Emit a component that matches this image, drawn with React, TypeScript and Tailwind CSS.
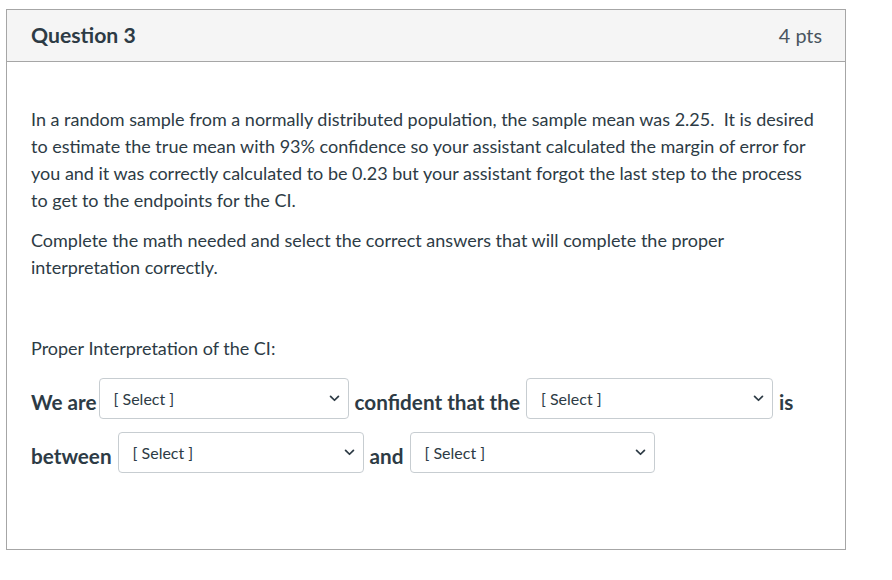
function Dropdown({ width, className = '' }: { width: string; className?: string }) {
  return (
    <div
      className={`${width} ${className} flex h-[41px] shrink-0 items-center justify-between rounded-[4px] border border-[#c7cdd1] bg-white pl-[14px] pr-[8px] font-normal`}
    >
      <span className="pb-[1px] text-[16px] text-[#2d3b45]">[ Select ]</span>
      <svg viewBox="0 0 12 8" className="h-[7px] w-[11px]" fill="none">
        <path d="M1.5 1.5 6 6l4.5-4.5" stroke="#2d3b45" strokeWidth="2" strokeLinecap="round" strokeLinejoin="round" />
      </svg>
    </div>
  );
}

export default function App() {
  return (
    <div className="min-h-[580px] bg-white pl-[6px] pt-[9px] font-['Lato',sans-serif] text-[#2d3b45]">
      <div className="flex h-[541px] w-[840px] flex-col border border-[#a6a6a6]">
        <div className="flex h-[52px] shrink-0 items-center justify-between border-b border-[#a6a6a6] bg-[#f5f5f5] pl-[24px] pr-[23px]">
          <h2 className="text-[21.2px] font-bold">Question 3</h2>
          <span className="text-[19.8px] text-[#4a5560]">4 pts</span>
        </div>

        <div className="px-[24px] pt-[44px] text-[18px] leading-[27px]">
          <p>
            In a random sample from a normally distributed population, the sample mean was 2.25.&nbsp; It is desired
            to estimate the true mean with 93% confidence so your assistant calculated the margin of error for
            you and it was correctly calculated to be 0.23 but your assistant forgot the last step to the process
            to get to the endpoints for the CI.
          </p>
          <p className="mt-[13px]">
            Complete the math needed and select the correct answers that will complete the proper interpretation
            correctly.
          </p>
          <p className="mt-[54px]">Proper Interpretation of the CI:</p>

          <div className="mt-[16px] flex items-center text-[20.7px] font-bold">
            <span className="pt-[7px]">We are</span>
            <Dropdown width="w-[250px]" className="ml-[2px]" />
            <span className="ml-[6px] pt-[7px]">confident that the</span>
            <Dropdown width="w-[247px]" className="ml-[6px]" />
            <span className="ml-[6px] pt-[7px]">is</span>
          </div>

          <div className="mt-[13px] flex items-center text-[20.7px] font-bold">
            <span className="pt-[7px]">between</span>
            <Dropdown width="w-[246px]" className="ml-[6px]" />
            <span className="ml-[6px] pt-[7px]">and</span>
            <Dropdown width="w-[245px]" className="ml-[6px]" />
          </div>
        </div>
      </div>
    </div>
  );
}
